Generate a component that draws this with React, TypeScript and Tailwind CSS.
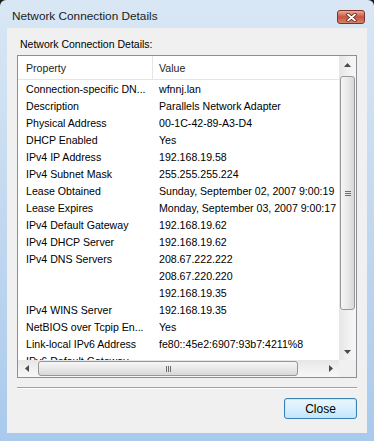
import React from 'react';

// Property / value pairs shown in the list view
const rows: [string, string][] = [
  ['Connection-specific DN...', 'wfnnj.lan'],
  ['Description', 'Parallels Network Adapter'],
  ['Physical Address', '00-1C-42-89-A3-D4'],
  ['DHCP Enabled', 'Yes'],
  ['IPv4 IP Address', '192.168.19.58'],
  ['IPv4 Subnet Mask', '255.255.255.224'],
  ['Lease Obtained', 'Sunday, September 02, 2007 9:00:19'],
  ['Lease Expires', 'Monday, September 03, 2007 9:00:17'],
  ['IPv4 Default Gateway', '192.168.19.62'],
  ['IPv4 DHCP Server', '192.168.19.62'],
  ['IPv4 DNS Servers', '208.67.222.222'],
  ['', '208.67.220.220'],
  ['', '192.168.19.35'],
  ['IPv4 WINS Server', '192.168.19.35'],
  ['NetBIOS over Tcpip En...', 'Yes'],
  ['Link-local IPv6 Address', 'fe80::45e2:6907:93b7:4211%8'],
  ['IPv6 Default Gateway', ''],
];

const Arrow = ({ dir }: { dir: 'up' | 'down' | 'left' | 'right' }) => {
  const pts = {
    up: '0,4 3.5,0 7,4',
    down: '0,0 7,0 3.5,4',
    left: '4,0 4,7 0,3.5',
    right: '0,0 4,3.5 0,7',
  }[dir];
  const vertical = dir === 'up' || dir === 'down';
  return (
    <svg width={vertical ? 7 : 4} height={vertical ? 4 : 7} viewBox={vertical ? '0 0 7 4' : '0 0 4 7'}>
      <polygon points={pts} fill="#4a4a4a" />
    </svg>
  );
};

const VScrollBar = () => (
  <div className="flex flex-col bg-gradient-to-r from-[#e6e6e6] via-[#f0f0f0] to-[#f7f7f7]">
    <div className="h-[17px] flex items-center justify-center">
      <Arrow dir="up" />
    </div>
    <div className="flex-1 px-[1px]">
      <div className="mt-[3px] h-[234px] rounded-[3px] border border-[#979797] bg-gradient-to-r from-[#f6f6f6] via-[#e9e9e9] to-[#d8d8d8] flex items-center justify-center">
        <div className="flex flex-col gap-[1px]">
          <div className="w-[6px] h-[1px] bg-[#6e6e6e]" />
          <div className="w-[6px] h-[1px] bg-[#6e6e6e]" />
          <div className="w-[6px] h-[1px] bg-[#6e6e6e]" />
        </div>
      </div>
    </div>
    <div className="h-[17px] flex items-center justify-center">
      <Arrow dir="down" />
    </div>
  </div>
);

const HScrollBar = () => (
  <div className="flex bg-gradient-to-b from-[#e6e6e6] via-[#f0f0f0] to-[#f7f7f7]">
    <div className="w-[17px] flex items-center justify-center">
      <Arrow dir="left" />
    </div>
    <div className="flex-1 py-[1px]">
      <div className="ml-[3px] w-[260px] h-full rounded-[3px] border border-[#979797] bg-gradient-to-b from-[#f6f6f6] via-[#e9e9e9] to-[#d8d8d8] flex items-center justify-center">
        <div className="flex gap-[1px]">
          <div className="w-[1px] h-[6px] bg-[#6e6e6e]" />
          <div className="w-[1px] h-[6px] bg-[#6e6e6e]" />
          <div className="w-[1px] h-[6px] bg-[#6e6e6e]" />
        </div>
      </div>
    </div>
    <div className="w-[17px] flex items-center justify-center">
      <Arrow dir="right" />
    </div>
  </div>
);

const ListView = () => (
  <div className="h-[323px] border border-[#8b9097] grid grid-cols-[1fr_17px] grid-rows-[1fr_17px] text-[10.6px] text-black">
    <div className="bg-white overflow-hidden">
      <div className="h-[24px] flex items-center border-b border-[#e5e5e5] text-[#1e1e1e]">
        <div className="w-[135px] shrink-0 h-full flex items-center pl-[8px] pt-[2px] border-r border-[#e5e5e5]">Property</div>
        <div className="h-full flex items-center pl-[6px] pt-[2px]">Value</div>
      </div>
      <div className="pt-[1px]">
        {rows.map(([prop, value], i) => (
          <div key={i} className="h-[17px] flex items-center whitespace-nowrap">
            <div className="w-[135px] shrink-0 pl-[8px] overflow-hidden">{prop}</div>
            <div className="pl-[6px]">{value}</div>
          </div>
        ))}
      </div>
    </div>
    <VScrollBar />
    <HScrollBar />
    <div className="bg-[#f0f0f0]" />
  </div>
);

const TitleClose = () => (
  <div className="w-[28px] h-[14px] rounded-[3px] border border-[#7b3327] bg-gradient-to-b from-[#e9aa9a] via-[#c65540] to-[#d7826a] flex items-center justify-center">
    <svg width="11" height="9" viewBox="0 0 11 9">
      <path d="M2 1.5 L9 7.5 M9 1.5 L2 7.5" stroke="#5a1f16" strokeWidth="3.4" strokeLinecap="round" />
      <path d="M2 1.5 L9 7.5 M9 1.5 L2 7.5" stroke="#ffffff" strokeWidth="1.8" strokeLinecap="round" />
    </svg>
  </div>
);

const App = () => {
  return (
    <div className="w-[374px] h-[441px] bg-[#1c1c1c] font-['Liberation_Sans',Arial,sans-serif]">
      <div className="h-full rounded-t-[6px] bg-gradient-to-b from-[#d9e7f5] via-[#c2d8ef] to-[#a9caec] flex flex-col px-[7px] pb-[8px]">
        <div className="h-[28px] pt-[6px] pl-[5px] pr-[2px] flex items-center justify-between">
          <span className="text-[11.8px] text-[#1b1b1b]">Network Connection Details</span>
          <TitleClose />
        </div>
        <div className="flex-1 bg-[#f0f0f0] px-[10px] flex flex-col">
          <div className="pt-[9px] h-[23px] leading-[14px] pl-[3px] text-[10.5px] text-black">Network Connection Details:</div>
          <div className="mt-[4px]">
            <ListView />
          </div>
          <div className="mt-[9px] border-t border-[#a0a0a0] border-b border-b-white" />
          <div className="mt-[9px] flex justify-end">
            <button className="w-[73px] h-[21px] rounded-[3px] border border-[#3c7fb1] bg-gradient-to-b from-[#eaf6fd] via-[#d9f0fc] to-[#bee6fd] text-[12px] text-black shadow-[inset_0_0_0_1px_#c6e8fa]">
              Close
            </button>
          </div>
        </div>
      </div>
    </div>
  );
};

export default App;
